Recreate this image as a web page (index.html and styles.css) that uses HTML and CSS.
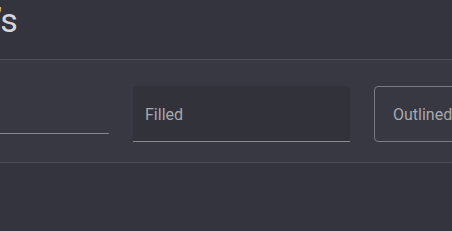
FILE: index.html
```
<!DOCTYPE html>
<html lang="en">
  <head>
    <meta charset="UTF-8" />
    <meta name="viewport" content="width=device-width, initial-scale=1.0" />
    <title>Text Fields</title>
    <link rel="stylesheet" href="styles.css">
  </head>

  <body>
    <div class="Page">
      <div class="Header">
        <h1>TextField’s</h1>
      </div>

      <!-- Demo -->
      <div class="Demo">
        <div class="field standard">
          <label>Standard</label>
        </div>
        <div class="field filled">
          <label>Filled</label>
        </div>
        <div class="field outlined">
          <label>Outlined</label>
        </div>
      </div>
    </div>
  </body>
</html>
```

FILE: styles.css
```
body {
  margin: 0;
  background-color: #34343e;
  font-family: Roboto, "Noto Sans", sans-serif;
  overflow: hidden;
}

.Page {
  margin-left: -240px;
  width: 900px;
}

.Header {
  padding: 0 0 19px;
  border-bottom: 1px solid #4f4f59;
}

.Header h1 {
  margin: 0 0 0 98px;
  font-size: 34px;
  font-weight: 400;
  line-height: 40px;
  color: #d6d6db;
}

.Demo {
  display: flex;
  align-items: flex-start;
  gap: 24px;
  padding: 26px 0 20px 132px;
  background-color: #383842;
  border-bottom: 1px solid #4f4f59;
}

.field {
  box-sizing: border-box;
  width: 217px;
  height: 56px;
}

.field label {
  display: block;
  font-size: 16px;
  line-height: 23px;
  color: #a8a8af;
}

.standard {
  height: 48px;
  border-bottom: 1px solid #85858b;
}

.standard label {
  padding-top: 16px;
}

.filled {
  background-color: #32323b;
  border-radius: 4px 4px 0 0;
  border-bottom: 1px solid #8a8a90;
  padding: 17px 12px 0;
}

.outlined {
  border: 1px solid #7a7a81;
  border-radius: 4px;
  padding: 16px 18px 0;
}
```
